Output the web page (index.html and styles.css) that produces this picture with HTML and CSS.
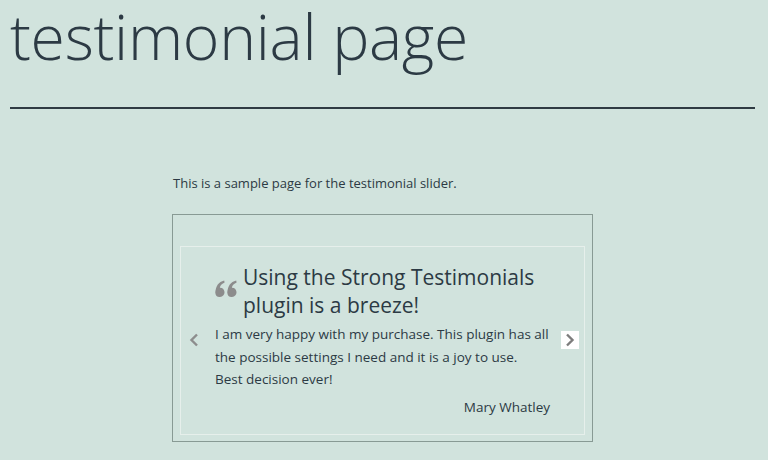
FILE: index.html
```html
<!DOCTYPE html>
<html lang="en">
<head>
  <meta charset="UTF-8">
  <title>testimonial page</title>
  <link rel="stylesheet" href="styles.css">
</head>
<body>
  <header class="page-header">
    <h1 class="page-title">testimonial page</h1>
    <hr class="page-rule">
  </header>

  <main class="content">
    <p class="intro">This is a sample page for the testimonial slider.</p>

    <div class="slider">
      <div class="slide">
        <button class="nav nav-prev" aria-label="Previous">
          <svg width="10" height="14" viewBox="0 0 10 14"><path d="M8 1.5 L2.5 7 L8 12.5" fill="none" stroke="#8d8d8d" stroke-width="2.4"/></svg>
        </button>

        <div class="testimonial">
          <div class="heading-row">
            <svg class="quote-mark" width="22" height="17" viewBox="0 0 22 17">
              <!-- two "66" shaped marks: round body with a tail curling up -->
              <path d="M5 17 A4.6 4.6 0 1 1 9.4 11.6 A4.6 4.6 0 0 1 5 17 Z M0.6 12.6 C0.4 6.5 3.5 2 9.2 0.6 L9.6 2.6 C6.2 4 4.6 6.4 4.8 9 Z" fill="#8c8c8c"/>
              <path d="M17 17 A4.6 4.6 0 1 1 21.4 11.6 A4.6 4.6 0 0 1 17 17 Z M12.6 12.6 C12.4 6.5 15.5 2 21.2 0.6 L21.6 2.6 C18.2 4 16.6 6.4 16.8 9 Z" fill="#8c8c8c"/>
            </svg>
            <h3 class="testimonial-title">Using the Strong Testimonials plugin is a breeze!</h3>
          </div>
          <p class="testimonial-text">I am very happy with my purchase. This plugin has all the possible settings I need and it is a joy to use.<br>Best decision ever!</p>
          <div class="testimonial-author">Mary Whatley</div>
        </div>

        <button class="nav nav-next" aria-label="Next">
          <svg width="10" height="14" viewBox="0 0 10 14"><path d="M2 1.5 L7.5 7 L2 12.5" fill="none" stroke="#7d7d7d" stroke-width="2.4"/></svg>
        </button>
      </div>
    </div>
  </main>
</body>
</html>
```

FILE: styles.css
```css
* { box-sizing: border-box; }

body {
  margin: 0;
  background-color: #d1e3dd;
  color: #2c3a44;
  font-family: 'Open Sans', 'Noto Sans', sans-serif;
}

.page-header {
  padding: 0 13px 0 10px;
}

.page-title {
  margin: 0;
  padding-top: 0;
  font-size: 62.5px;
  font-weight: 300;
  line-height: 72px;
  letter-spacing: -0.3px;
}

.page-rule {
  margin: 35px 0 0;
  border: none;
  border-top: 2px solid #2f3b43;
}

.content {
  width: 421px;
  margin: 0 0 0 172px;
}

.intro {
  margin: 64px 0 21px 1px;
  font-size: 13px;
  line-height: 20px;
}

.slider {
  border: 1px solid #889a94;
  padding: 31px 7px 6px;
}

.slide {
  display: flex;
  align-items: center;
  border: 1px solid #e6efeb;
  padding: 16px 5px 16px 4px;
}

.nav {
  flex: 0 0 auto;
  display: flex;
  align-items: center;
  justify-content: center;
  border: none;
  padding: 0;
  cursor: pointer;
}

.nav-prev {
  width: 18px;
  height: 18px;
  background: none;
  margin-right: 12px;
}

.nav-next {
  width: 18px;
  height: 18px;
  background: #fff;
  margin-left: 10px;
}

.testimonial {
  flex: 1;
}

.heading-row {
  display: flex;
  align-items: flex-start;
}

.quote-mark {
  flex: 0 0 22px;
  margin: 17px 6px 0 0;
}

.testimonial-title {
  margin: 0;
  font-size: 21px;
  font-weight: 400;
  line-height: 28px;
}

.testimonial-text {
  margin: 4px 0 0;
  font-size: 13.5px;
  line-height: 22.5px;
}

.testimonial-author {
  margin-top: 5px;
  text-align: right;
  font-size: 13.5px;
  line-height: 22px;
  padding-right: 1px;
}
```
